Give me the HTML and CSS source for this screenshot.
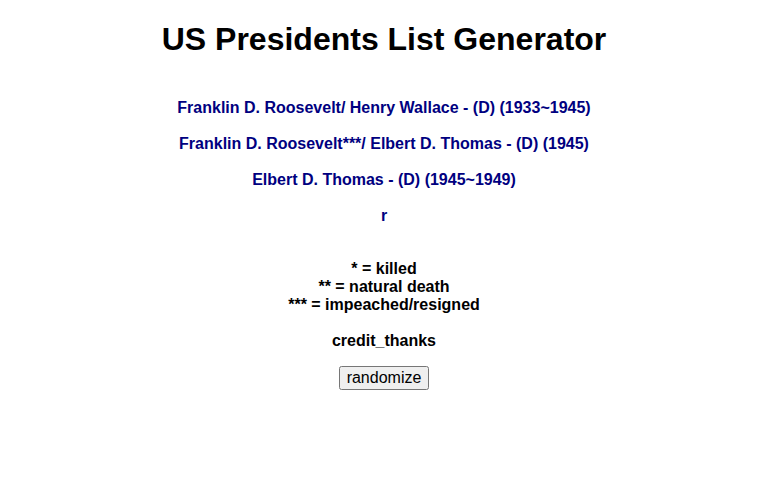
FILE: index.html
```html
<!DOCTYPE html>
<html>
<head>
<meta charset="utf-8">
<link rel="stylesheet" href="styles.css">
</head>
<body>
<h1 class="title">US Presidents List Generator</h1>
<div class="list">
<p class="entry">Franklin D. Roosevelt/ Henry Wallace - (D) (1933~1945)</p>
<p class="entry">Franklin D. Roosevelt***/ Elbert D. Thomas - (D) (1945)</p>
<p class="entry">Elbert D. Thomas - (D) (1945~1949)</p>
<p class="entry">r</p>
</div>
<div class="legend">
<div>* = killed</div>
<div>** = natural death</div>
<div>*** = impeached/resigned</div>
</div>
<p class="credit">credit_thanks</p>
<div class="actions"><button class="btn">randomize</button></div>
</body>
</html>
```
FILE: styles.css
```css
body {
  margin: 0;
  font-family: "Liberation Sans", Arial, sans-serif;
  text-align: center;
  font-weight: bold;
  color: #000;
}
.title {
  font-size: 32px;
  margin: 21px 0 0;
  line-height: 37px;
}
.list {
  margin-top: 40px;
}
.entry {
  color: #000080;
  font-size: 16px;
  line-height: 20px;
  margin: 0 0 16px;
}
.legend {
  margin-top: 34px;
  font-size: 16px;
  line-height: 18px;
}
.credit {
  font-size: 16px;
  line-height: 18px;
  margin: 18px 0 16px;
}
.btn {
  font-family: "Liberation Sans", Arial, sans-serif;
  font-size: 16px;
  font-weight: normal;
  padding: 1px 6px;
}
```
